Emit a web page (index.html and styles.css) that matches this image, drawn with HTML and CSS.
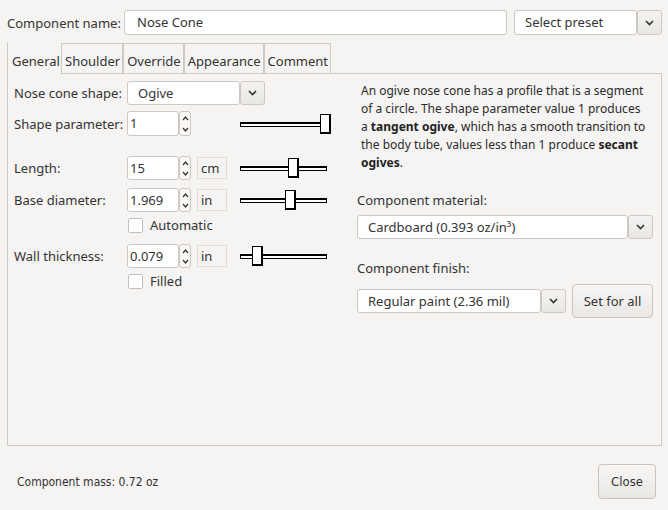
FILE: index.html
```html
<!DOCTYPE html>
<html>

<head>
    <title>Nose cone configuration</title>
    <link rel="stylesheet" href="styles.css">
</head>

<body>
    <div class="dialog">
        <div class="name-row">
            <span class="name-label">Component name:</span>
            <div class="field name-field">Nose Cone</div>
            <div class="combo preset-combo">
                <div class="combo-text">Select preset</div>
                <div class="combo-btn">
                    <svg width="9" height="6" viewBox="0 0 9 6"><path d="M1 1l3.5 3.5L8 1" fill="none" stroke="#333" stroke-width="1.6"/></svg>
                </div>
            </div>
        </div>

        <div class="tabs">
            <div class="tab active">General</div>
            <div class="tab">Shoulder</div>
            <div class="tab">Override</div>
            <div class="tab">Appearance</div>
            <div class="tab">Comment</div>
        </div>

        <div class="panel">
            <div class="left-col">
                <div class="row shape-row">
                    <span class="label">Nose cone shape:</span>
                    <div class="combo shape-combo">
                        <div class="combo-text">Ogive</div>
                        <div class="combo-btn">
                            <svg width="9" height="6" viewBox="0 0 9 6"><path d="M1 1l3.5 3.5L8 1" fill="none" stroke="#333" stroke-width="1.6"/></svg>
                        </div>
                    </div>
                </div>

                <div class="row param-row">
                    <span class="label">Shape parameter:</span>
                    <div class="spinner">
                        <div class="spin-field">1</div>
                        <div class="spin-arrows">
                            <svg width="7" height="5" viewBox="0 0 7 5"><path d="M1 4l2.5-3L6 4" fill="none" stroke="#333" stroke-width="1.2"/></svg>
                            <svg width="7" height="5" viewBox="0 0 7 5"><path d="M1 1l2.5 3L6 1" fill="none" stroke="#333" stroke-width="1.2"/></svg>
                        </div>
                    </div>
                    <span></span>
                    <div class="slider"><div class="track"></div><div class="thumb" style="left: 80px"></div></div>
                </div>

                <div class="row length-row">
                    <span class="label">Length:</span>
                    <div class="spinner">
                        <div class="spin-field">15</div>
                        <div class="spin-arrows">
                            <svg width="7" height="5" viewBox="0 0 7 5"><path d="M1 4l2.5-3L6 4" fill="none" stroke="#333" stroke-width="1.2"/></svg>
                            <svg width="7" height="5" viewBox="0 0 7 5"><path d="M1 1l2.5 3L6 1" fill="none" stroke="#333" stroke-width="1.2"/></svg>
                        </div>
                    </div>
                    <div class="unit">cm</div>
                    <div class="slider"><div class="track"></div><div class="thumb" style="left: 48px"></div></div>
                </div>

                <div class="row diameter-row">
                    <span class="label">Base diameter:</span>
                    <div class="spinner">
                        <div class="spin-field">1.969</div>
                        <div class="spin-arrows">
                            <svg width="7" height="5" viewBox="0 0 7 5"><path d="M1 4l2.5-3L6 4" fill="none" stroke="#333" stroke-width="1.2"/></svg>
                            <svg width="7" height="5" viewBox="0 0 7 5"><path d="M1 1l2.5 3L6 1" fill="none" stroke="#333" stroke-width="1.2"/></svg>
                        </div>
                    </div>
                    <div class="unit">in</div>
                    <div class="slider"><div class="track"></div><div class="thumb" style="left: 45px"></div></div>
                </div>

                <div class="check-row auto-row">
                    <span class="checkbox"></span>
                    <span>Automatic</span>
                </div>

                <div class="row wall-row">
                    <span class="label">Wall thickness:</span>
                    <div class="spinner">
                        <div class="spin-field">0.079</div>
                        <div class="spin-arrows">
                            <svg width="7" height="5" viewBox="0 0 7 5"><path d="M1 4l2.5-3L6 4" fill="none" stroke="#333" stroke-width="1.2"/></svg>
                            <svg width="7" height="5" viewBox="0 0 7 5"><path d="M1 1l2.5 3L6 1" fill="none" stroke="#333" stroke-width="1.2"/></svg>
                        </div>
                    </div>
                    <div class="unit">in</div>
                    <div class="slider"><div class="track"></div><div class="thumb" style="left: 12px"></div></div>
                </div>

                <div class="check-row filled-row">
                    <span class="checkbox"></span>
                    <span>Filled</span>
                </div>
            </div>

            <div class="right-col">
                <p class="description">An ogive nose cone has a profile that is a segment of a circle. The shape parameter value 1 produces a <b>tangent ogive</b>, which has a smooth transition to the body tube, values less than 1 produce <b>secant ogives</b>.</p>

                <div class="section-label material-label">Component material:</div>
                <div class="combo material-combo">
                    <div class="combo-text">Cardboard (0.393 oz/in³)</div>
                    <div class="combo-btn">
                        <svg width="9" height="6" viewBox="0 0 9 6"><path d="M1 1l3.5 3.5L8 1" fill="none" stroke="#333" stroke-width="1.6"/></svg>
                    </div>
                </div>

                <div class="section-label finish-label">Component finish:</div>
                <div class="finish-row">
                    <div class="combo finish-combo">
                        <div class="combo-text">Regular paint (2.36 mil)</div>
                        <div class="combo-btn">
                            <svg width="9" height="6" viewBox="0 0 9 6"><path d="M1 1l3.5 3.5L8 1" fill="none" stroke="#333" stroke-width="1.6"/></svg>
                        </div>
                    </div>
                    <button class="btn set-all">Set for all</button>
                </div>
            </div>
        </div>

        <div class="footer">
            <span class="mass">Component mass: 0.72 oz</span>
            <button class="btn close-btn">Close</button>
        </div>
    </div>
</body>

</html>
```

FILE: styles.css
```css
body {
    margin: 0;
    background-color: #f5f4f2;
    font-family: "Noto Sans", "Open Sans", sans-serif;
    font-size: 13px;
    color: #333;
}

.dialog {
    padding: 10px 6px 0 7px;
}

/* top line with the name and preset picker */
.name-row {
    display: flex;
    align-items: center;
    height: 25px;
}

.name-label {
    width: 117px;
}

.field {
    box-sizing: border-box;
    height: 25px;
    background-color: white;
    border: 1px solid #cdc8c2;
    border-radius: 3px;
    line-height: 23px;
}

.name-field {
    width: 383px;
    padding-left: 12px;
}

.combo {
    display: flex;
    height: 25px;
}

.combo-text {
    box-sizing: border-box;
    flex: 1;
    background-color: white;
    border: 1px solid #cdc8c2;
    border-radius: 3px;
    padding-left: 10px;
    line-height: 23px;
}

.combo-btn {
    box-sizing: border-box;
    width: 25px;
    border: 1px solid #cdc8c2;
    border-radius: 3px;
    background: linear-gradient(#f4f3f1, #e9e7e4);
    display: flex;
    align-items: center;
    justify-content: center;
}

.preset-combo {
    width: 148px;
    margin-left: 7px;
}

/* tab strip */
.tabs {
    display: flex;
    align-items: flex-end;
    height: 31px;
    margin-top: 7px;
    position: relative;
    z-index: 1;
}

.tab {
    box-sizing: border-box;
    height: 30px;
    padding: 9px 2px 0 3px;
    border: 1px solid #cdc9c3;
    border-bottom: none;
    line-height: 17px;
}

.tab.active {
    height: 32px;
    margin-bottom: -1px;
    border-top-color: transparent;
    border-right: none;
    padding: 10px 5px 0 4px;
    background-color: #f5f4f2;
    width: 54px;
}

.panel {
    box-sizing: border-box;
    height: 373px;
    border: 1px solid #cdc9c3;
    padding: 7px 8px 0 6px;
    display: flex;
    justify-content: space-between;
}

/* left column: shape, sizes and sliders */
.left-col {
    width: 320px;
}

.row {
    display: grid;
    grid-template-columns: 113px 64px 36px 90px;
    align-items: center;
    height: 24px;
}

.row .unit {
    margin-left: 6px;
}

.row .slider {
    margin-left: 13px;
}

.shape-row {
    display: flex;
}

.shape-row .label {
    width: 113px;
}

.shape-combo {
    width: 138px;
    height: 24px;
}

.shape-combo .combo-text {
    line-height: 22px;
}

.param-row {
    margin-top: 6px;
    height: 25px;
}

.length-row {
    margin-top: 20px;
}

.diameter-row {
    margin-top: 8px;
}

.wall-row {
    margin-top: 11px;
}

.spinner {
    display: flex;
    height: 100%;
}

.spin-field {
    box-sizing: border-box;
    width: 52px;
    background-color: white;
    border: 1px solid #cdc8c2;
    border-radius: 3px;
    padding-left: 2px;
    line-height: 22px;
}

.spin-arrows {
    box-sizing: border-box;
    width: 12px;
    border: 1px solid #cdc8c2;
    border-radius: 3px;
    background-color: #f9f8f7;
    display: flex;
    flex-direction: column;
    justify-content: space-between;
    align-items: center;
    padding: 4px 0 3px;
}

.spin-arrows svg {
    display: block;
}

.unit {
    box-sizing: border-box;
    width: 30px;
    height: 22px;
    border: 1px solid #e2dfdb;
    padding-left: 3px;
    line-height: 20px;
}

/* slider: double-line track with a boxed thumb */
.slider {
    position: relative;
    width: 90px;
    height: 20px;
}

.track {
    position: absolute;
    left: 0;
    top: 8px;
    box-sizing: border-box;
    width: 87px;
    height: 5px;
    border: 1px solid black;
    border-top-width: 2px;
    background-color: white;
}

.thumb {
    position: absolute;
    top: 0;
    box-sizing: border-box;
    width: 11px;
    height: 20px;
    background-color: white;
    border: 1px solid black;
    border-right-width: 2px;
    border-bottom-width: 2px;
}

.check-row {
    display: flex;
    align-items: center;
    height: 16px;
    margin-left: 114px;
    margin-top: 5px;
}

.checkbox {
    box-sizing: border-box;
    width: 15px;
    height: 15px;
    border: 1px solid #c3beb8;
    border-radius: 2px;
    background-color: white;
    margin-right: 7px;
}

/* right column: description and material pickers */
.right-col {
    width: 296px;
}

.description {
    width: 288px;
    margin: 1px 0 0 4px;
    font-size: 12px;
    line-height: 18px;
    color: #2b2b2b;
}

.description b {
    font-weight: bold;
    color: #222;
}

.section-label {
    height: 18px;
    line-height: 18px;
}

.material-label {
    margin-top: 19px;
}

.material-combo {
    height: 24px;
    margin-top: 6px;
}

.material-combo .combo-text {
    line-height: 22px;
}

.finish-label {
    margin-top: 20px;
}

.finish-row {
    display: flex;
    align-items: center;
    margin-top: 7px;
}

.finish-combo {
    width: 209px;
    height: 24px;
}

.finish-combo .combo-text {
    line-height: 22px;
}

.btn {
    box-sizing: border-box;
    border: 1px solid #c9c4be;
    border-radius: 4px;
    background: linear-gradient(#f7f6f5, #eae8e5);
    color: #333;
    font-family: inherit;
    font-size: 13px;
    padding: 0;
}

.set-all {
    width: 81px;
    height: 34px;
    margin-left: 6px;
}

.footer {
    display: flex;
    justify-content: space-between;
    align-items: center;
    margin-top: 18px;
    padding: 0 6px 0 10px;
}

.mass {
    font-family: "DejaVu Sans Condensed", "DejaVu Sans", sans-serif;
    font-stretch: condensed;
    font-size: 12px;
    color: #333;
}

.close-btn {
    width: 58px;
    height: 35px;
    font-family: "DejaVu Sans Condensed", "DejaVu Sans", sans-serif;
    font-stretch: condensed;
    font-size: 13px;
}
```
